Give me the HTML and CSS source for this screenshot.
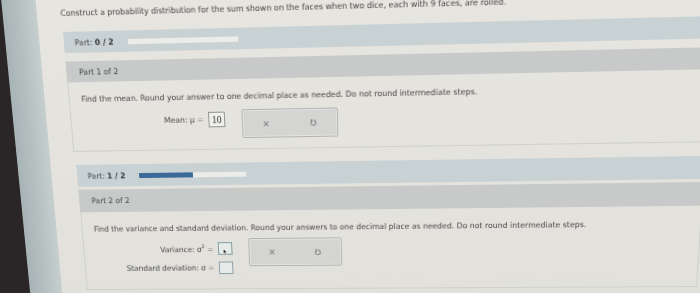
FILE: index.html
```html
<!DOCTYPE html>
<html lang="en">
<head>
<meta charset="utf-8">
<title>Probability distribution</title>
<link rel="stylesheet" href="styles.css">
</head>
<body>
<div class="screen">
  <div class="bezel"></div>
  <div class="strip"></div>
  <div class="page">
    <div class="content">
      <p class="question">Construct a probability distribution for the sum shown on the faces when two dice, each with 9 faces, are rolled.</p>

      <section class="part part--one">
        <div class="progress-row">
          <span class="progress-label">Part: <b>0 / 2</b></span>
          <span class="track"><span class="fill" style="width:0%"></span></span>
        </div>
        <div class="part-head">Part 1 of 2</div>
        <div class="part-body">
          <p class="prompt">Find the mean. Round your answer to one decimal place as needed. Do not round intermediate steps.</p>
          <div class="answer-row">
            <div class="answers">
              <div class="answer"><span class="label">Mean: μ <span class="eq">=</span></span><span class="box box--filled">10</span></div>
            </div>
            <div class="btn-group">
              <button class="btn" type="button" aria-label="Clear">
                <svg class="ico-x" viewBox="0 0 8 8"><path d="M1.5 1.5 L6.5 6.5 M6.5 1.5 L1.5 6.5"/></svg>
              </button>
              <button class="btn" type="button" aria-label="Start over">
                <svg class="ico-undo" viewBox="0 0 10 10"><path d="M3.6 2.6 A3.1 3.1 0 1 0 5.6 2.2"/><path d="M2.2 1.4 L3.8 2.7 L2.6 4.3"/></svg>
              </button>
            </div>
          </div>
        </div>
      </section>

      <section class="part part--two">
        <div class="progress-row">
          <span class="progress-label">Part: <b>1 / 2</b></span>
          <span class="track"><span class="fill" style="width:50%"></span></span>
        </div>
        <div class="part-head">Part 2 of 2</div>
        <div class="part-body">
          <p class="prompt">Find the variance and standard deviation. Round your answers to one decimal place as needed. Do not round intermediate steps.</p>
          <div class="answer-row">
            <div class="answers">
              <div class="answer"><span class="label">Variance: σ<sup>2</sup> <span class="eq">=</span></span><span class="box box--active"><svg class="cursor" viewBox="0 0 6 9"><path d="M0.5 0.5 L0.5 7 L2 5.6 L3.2 8.3 L4.3 7.8 L3.1 5.2 L5.2 5.2 Z"/></svg></span></div>
              <div class="answer"><span class="label">Standard deviation: σ <span class="eq">=</span></span><span class="box"></span></div>
            </div>
            <div class="btn-group">
              <button class="btn" type="button" aria-label="Clear">
                <svg class="ico-x" viewBox="0 0 8 8"><path d="M1.5 1.5 L6.5 6.5 M6.5 1.5 L1.5 6.5"/></svg>
              </button>
              <button class="btn" type="button" aria-label="Start over">
                <svg class="ico-undo" viewBox="0 0 10 10"><path d="M3.6 2.6 A3.1 3.1 0 1 0 5.6 2.2"/><path d="M2.2 1.4 L3.8 2.7 L2.6 4.3"/></svg>
              </button>
            </div>
          </div>
        </div>
      </section>
    </div>
  </div>
</div>
</body>
</html>
```
FILE: styles.css
```css
html, body {
  margin: 0;
  width: 700px;
  height: 293px;
  overflow: hidden;
  background: #2a2526;
}

/* photographed monitor: the flat page is projected with a perspective matrix */
.screen {
  width: 760px;
  height: 320px;
  display: flex;
  transform-origin: 0 0;
  transform: matrix3d(0.978131, -0.02639, 0, -0.000074441, 0.106587, 1.075016, 0, 0.00024753, 0, 0, 1, 0, -1.8299, -0.635, 0, 1);
  font-family: "DejaVu Sans", Verdana, sans-serif;
  font-size: 7.8px;
  color: #484848;
}

.bezel {
  width: 3px;
  background: #2a2526;
}

.strip {
  width: 35px;
  background: linear-gradient(90deg, #a7b3b4 0%, #b6c1c2 55%, #c6cfcf 100%);
}

.page {
  flex: 1;
  background: linear-gradient(180deg, #e7e5df 0%, #e4e2dc 60%, #e1e0db 100%);
  padding: 9px 0 0 25px;
}

.content {
  width: 634px;
}

.question {
  margin: 0 0 0 -1px;
  height: 12px;
  line-height: 12px;
  white-space: nowrap;
}

.progress-row {
  display: flex;
  align-items: center;
  height: 20px;
  margin-top: 11px;
  padding-left: 11px;
  background: #c8d1d4;
}

.progress-label {
  width: 54px;
  white-space: nowrap;
}

.progress-label b {
  color: #333;
}

.track {
  display: block;
  width: 111px;
  height: 5px;
  background: #ebebe7;
}

.fill {
  display: block;
  height: 100%;
  background: #3b6a99;
}

.part-head {
  display: flex;
  align-items: center;
  height: 20px;
  margin-top: 8px;
  padding-left: 13px;
  background: #c7cac9;
}

.part-body {
  border: 1px solid #cfd0cc;
  border-top: none;
  padding: 11px 12px 10px;
}

.prompt {
  margin: 0;
  line-height: 12px;
  white-space: nowrap;
}

.answer-row {
  display: flex;
  align-items: flex-start;
  margin-top: 6px;
}

.answers {
  width: 146px;
  margin-top: 2px;
  display: flex;
  flex-direction: column;
  align-items: flex-end;
  gap: 7px;
}

.answer {
  display: flex;
  align-items: center;
  gap: 5px;
  white-space: nowrap;
}

.label sup {
  font-size: 5px;
  vertical-align: 4px;
}

.eq {
  color: #8c8c8c;
}

.box {
  position: relative;
  box-sizing: border-box;
  width: 15px;
  height: 13px;
  border: 1px solid #86a0a5;
  background: #e6ebea;
}

.box--filled {
  width: 17px;
  height: 15px;
  border-color: #8e9796;
  background: #f0f0ed;
  display: flex;
  align-items: center;
  justify-content: center;
  font-family: "Liberation Serif", "Times New Roman", serif;
  font-size: 10px;
  color: #333;
}

.box--active {
  border-color: #7d9aa0;
}

.cursor {
  position: absolute;
  left: 4px;
  top: 5px;
  width: 5px;
  height: 8px;
  fill: #1e1e1e;
  stroke: #f2f2f2;
  stroke-width: 0.6;
}

.btn-group {
  display: flex;
  box-sizing: border-box;
  width: 97px;
  height: 28px;
  margin-left: 17px;
  border: 1px solid #b3b4b2;
  border-radius: 2px;
  background: #d4d5d3;
  box-shadow: inset 0 0 0 1px #e3e4e2;
}

.btn {
  flex: 1;
  display: flex;
  align-items: center;
  justify-content: center;
  padding: 0;
  border: 0;
  background: none;
}

.ico-x {
  width: 7px;
  height: 7px;
  fill: none;
  stroke: #6a6a6a;
  stroke-width: 1;
}

.ico-undo {
  width: 8px;
  height: 8px;
  fill: none;
  stroke: #6a6a6a;
  stroke-width: 1;
}

/* second part: slightly taller rows in the photo */
.part--two {
  margin-left: 2px;
}

.part--two .progress-row {
  height: 22px;
  margin-top: 13px;
}

.part--two .part-head {
  height: 23px;
  margin-top: 3px;
}

.part--two .part-body {
  padding-top: 12px;
  padding-bottom: 15px;
}

.part--two .answer-row {
  margin-top: 4px;
}

.part--two .answers {
  width: 145px;
  margin-top: 4px;
}

.part--two .btn-group {
  height: 29px;
}
```
